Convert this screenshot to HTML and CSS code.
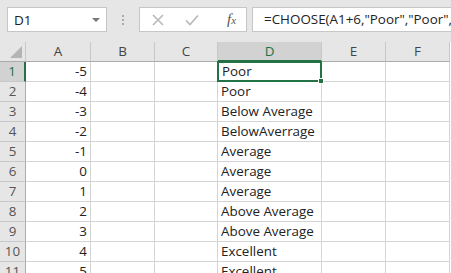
FILE: index.html
```html
<!DOCTYPE html>
<html lang="en">
<head>
    <meta charset="UTF-8">
    <title>CHOOSE sheet</title>
    <link rel="stylesheet" href="styles.css">
</head>
<body>
    <div class="toolbar">
        <div class="name-box">
            <span>D1</span>
            <span class="caret"></span>
        </div>
        <div class="grip">
            <span></span><span></span><span></span>
        </div>
        <div class="fx-box">
            <svg class="ico" width="14" height="14" viewBox="0 0 14 14"><path d="M2 2L12 12M12 2L2 12" stroke="#b9b9b9" stroke-width="1.6" fill="none"/></svg>
            <svg class="ico" width="16" height="14" viewBox="0 0 16 14"><path d="M2 7.5L6 11.5L14 2.5" stroke="#b9b9b9" stroke-width="1.7" fill="none"/></svg>
            <span class="fx">f<i>x</i></span>
        </div>
        <div class="formula">=CHOOSE(A1+6,"Poor","Poor","Below Average","BelowAverrage","Average","Average","Average","Above Average","Above Average","Excellent","Excellent")</div>
    </div>

    <div class="sheet">
        <div class="hd corner"><span class="tri"></span></div>
        <div class="hd">A</div>
        <div class="hd">B</div>
        <div class="hd">C</div>
        <div class="hd sel-col">D</div>
        <div class="hd">E</div>
        <div class="hd">F</div>

        <div class="rh sel-row">1</div><div class="c num">-5</div><div class="c"></div><div class="c"></div><div class="c txt active">Poor<span class="handle"></span></div><div class="c"></div><div class="c"></div>
        <div class="rh">2</div><div class="c num">-4</div><div class="c"></div><div class="c"></div><div class="c txt">Poor</div><div class="c"></div><div class="c"></div>
        <div class="rh">3</div><div class="c num">-3</div><div class="c"></div><div class="c"></div><div class="c txt">Below Average</div><div class="c"></div><div class="c"></div>
        <div class="rh">4</div><div class="c num">-2</div><div class="c"></div><div class="c"></div><div class="c txt">BelowAverrage</div><div class="c"></div><div class="c"></div>
        <div class="rh">5</div><div class="c num">-1</div><div class="c"></div><div class="c"></div><div class="c txt">Average</div><div class="c"></div><div class="c"></div>
        <div class="rh">6</div><div class="c num">0</div><div class="c"></div><div class="c"></div><div class="c txt">Average</div><div class="c"></div><div class="c"></div>
        <div class="rh">7</div><div class="c num">1</div><div class="c"></div><div class="c"></div><div class="c txt">Average</div><div class="c"></div><div class="c"></div>
        <div class="rh">8</div><div class="c num">2</div><div class="c"></div><div class="c"></div><div class="c txt">Above Average</div><div class="c"></div><div class="c"></div>
        <div class="rh">9</div><div class="c num">3</div><div class="c"></div><div class="c"></div><div class="c txt">Above Average</div><div class="c"></div><div class="c"></div>
        <div class="rh">10</div><div class="c num">4</div><div class="c"></div><div class="c"></div><div class="c txt">Excellent</div><div class="c"></div><div class="c"></div>
        <div class="rh">11</div><div class="c num">5</div><div class="c"></div><div class="c"></div><div class="c txt">Excellent</div><div class="c"></div><div class="c"></div>
    </div>
</body>
</html>
```

FILE: styles.css
```css
* {
    box-sizing: border-box;
    margin: 0;
    padding: 0;
}

body {
    width: 451px;
    height: 273px;
    overflow: hidden;
    background: #ffffff;
    font-family: 'Open Sans', 'Liberation Sans', sans-serif;
    color: #222222;
}

/* formula bar */
.toolbar {
    height: 42px;
    background: #e6e6e6;
    display: flex;
    align-items: flex-start;
    padding: 7px 0 0 7px;
    white-space: nowrap;
}

.name-box {
    width: 100px;
    height: 25px;
    background: #ffffff;
    border: 1px solid #c6c6c6;
    display: flex;
    align-items: center;
    justify-content: space-between;
    padding: 0 6px 0 6px;
    font-size: 13.5px;
    color: #222;
}

.caret {
    width: 0;
    height: 0;
    border-left: 4px solid transparent;
    border-right: 4px solid transparent;
    border-top: 4px solid #777;
}

.grip {
    width: 32px;
    height: 25px;
    display: flex;
    flex-direction: column;
    align-items: center;
    justify-content: center;
    gap: 2px;
}

.grip span {
    width: 2px;
    height: 2px;
    background: #aaaaaa;
}

.fx-box {
    width: 108px;
    height: 25px;
    background: #ffffff;
    border: 1px solid #c6c6c6;
    display: flex;
    align-items: center;
    padding-left: 11px;
    gap: 19px;
}

.fx {
    font-family: 'Liberation Serif', serif;
    font-style: italic;
    font-size: 15px;
    color: #555;
    margin-left: 8px;
}

.fx i {
    font-size: 11px;
}

.formula {
    flex: 1;
    height: 25px;
    margin-left: 5px;
    background: #ffffff;
    border: 1px solid #c6c6c6;
    border-right: none;
    overflow: hidden;
    font-size: 13.4px;
    line-height: 23px;
    padding-left: 11px;
    color: #222;
}

/* sheet */
.sheet {
    display: grid;
    grid-template-columns: 26px 65px 64px 63px 104px 64px 64px;
    grid-template-rows: 20px repeat(11, 20px);
    font-size: 13.4px;
}

.hd {
    background: #e6e6e6;
    border-right: 1px solid #c8c8c8;
    border-bottom: 1px solid #ababab;
    text-align: center;
    line-height: 19px;
    color: #444;
}

.corner {
    position: relative;
}

.tri {
    position: absolute;
    right: 3px;
    bottom: 3px;
    width: 0;
    height: 0;
    border-left: 12px solid transparent;
    border-bottom: 12px solid #b4b4b4;
}

.sel-col {
    background: #d2d2d2;
    color: #217346;
    border-bottom: 2px solid #217346;
}

.rh {
    background: #e6e6e6;
    border-right: 1px solid #ababab;
    border-bottom: 1px solid #c8c8c8;
    text-align: center;
    line-height: 19px;
    color: #555;
}

.sel-row {
    background: #d2d2d2;
    color: #217346;
    border-right: 2px solid #217346;
}

.c {
    border-right: 1px solid #d4d4d4;
    border-bottom: 1px solid #d4d4d4;
    line-height: 19px;
    white-space: nowrap;
    overflow: visible;
}

.num {
    text-align: right;
    padding-right: 3px;
}

.txt {
    padding-left: 3px;
}

.active {
    position: relative;
    border: 2px solid #217346;
    margin: -1px 0 0 -1px;
    line-height: 17px;
    padding-left: 3px;
}

.handle {
    position: absolute;
    right: -4px;
    bottom: -4px;
    width: 6px;
    height: 6px;
    background: #217346;
    border: 1px solid #ffffff;
}
```
